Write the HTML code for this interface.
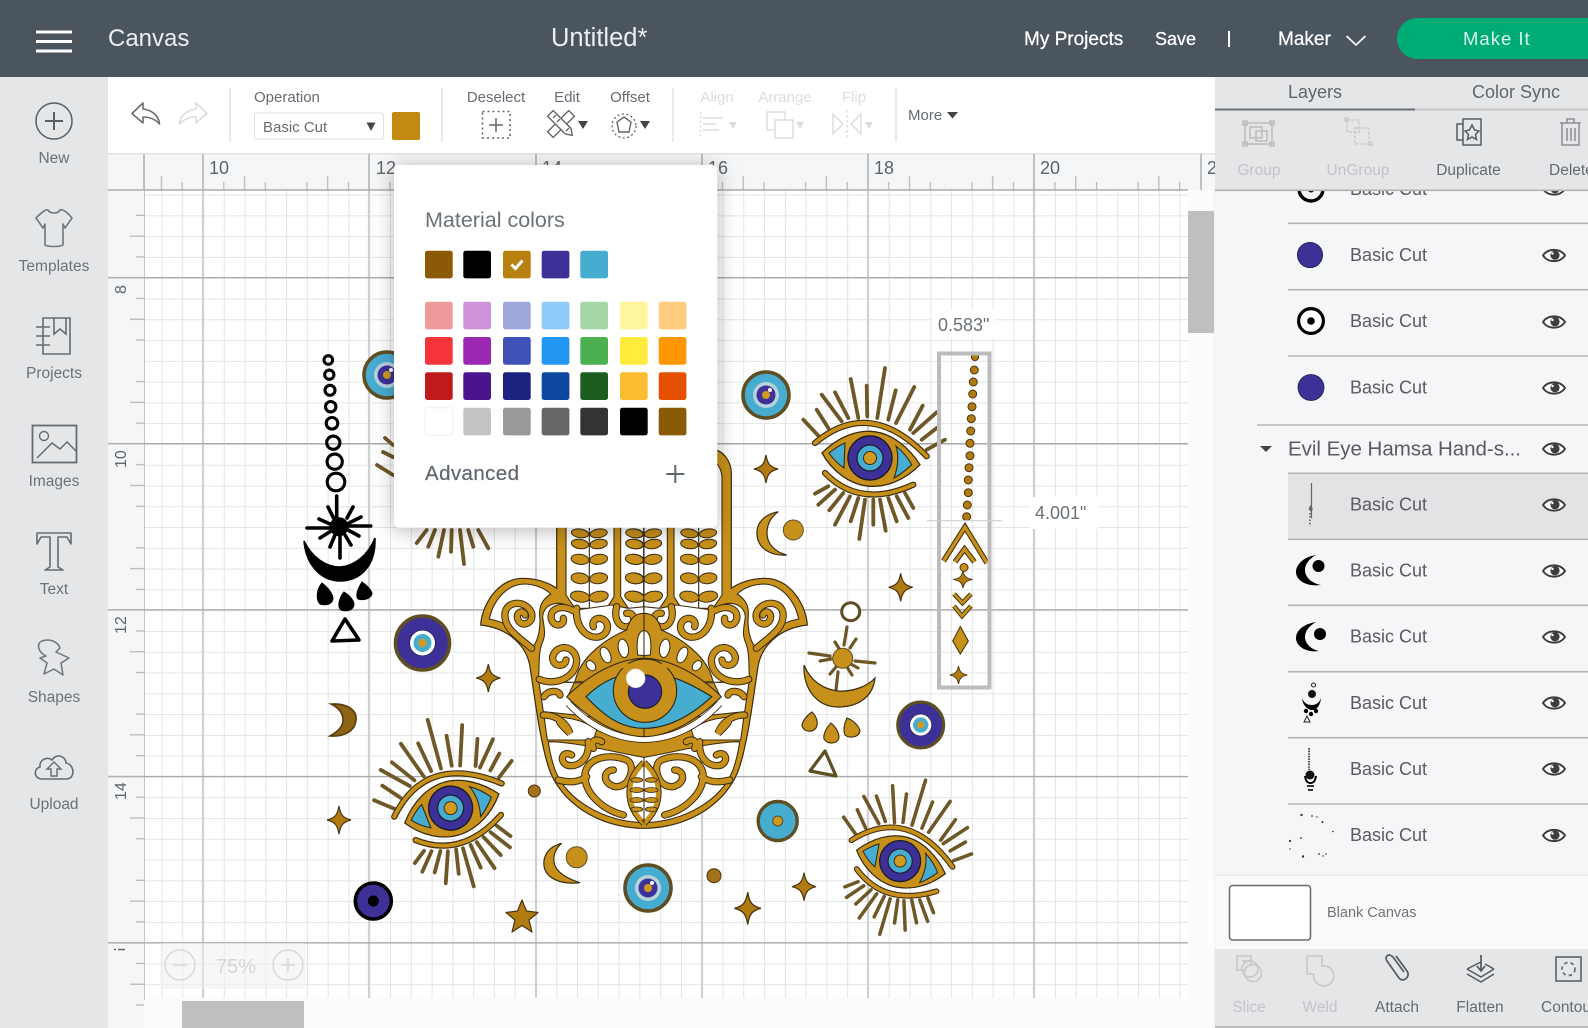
<!DOCTYPE html>
<html><head><meta charset="utf-8"><title>Canvas</title>
<style>
html,body{margin:0;padding:0;background:#fff;width:1588px;height:1028px;overflow:hidden}
svg{display:block;position:absolute;left:0;top:0;filter:blur(.35px)}
text{font-family:"Liberation Sans",sans-serif}
.hd{fill:#fff;font-size:19px;stroke:#fff;stroke-width:.25px}
.lb{fill:#6b7279;font-size:15.5px;text-anchor:middle}
.tb{fill:#666c72;font-size:15px;text-anchor:middle}
.dis{fill:#dcdde0;font-size:15px;text-anchor:middle}
.pa{fill:#666b71;font-size:15.5px;text-anchor:middle}
.pd{fill:#c2c4c7;font-size:15.5px;text-anchor:middle}
.rw{fill:#5b5a61;font-size:18px}
.ru{fill:#5f6469;font-size:18px}
</style></head><body>
<svg width="1588" height="1028" viewBox="0 0 1588 1028" xmlns="http://www.w3.org/2000/svg">
<defs>
<pattern id="gm" x="203" y="277.7" width="20.78" height="20.78" patternUnits="userSpaceOnUse">
<path d="M0,0V20.78M0,0H20.78" stroke="#e3e4e5" stroke-width="2" fill="none"/>
</pattern>
<pattern id="tt" x="203" y="154" width="83.12" height="36" patternUnits="userSpaceOnUse">
<path d="M20.78,28V36M41.56,22V36M62.34,28V36" stroke="#b5b7b9" stroke-width="1.2" fill="none"/>
</pattern>
<pattern id="tl" x="108" y="277.7" width="36" height="83.12" patternUnits="userSpaceOnUse">
<path d="M28,20.78H36M22,41.56H36M28,62.34H36" stroke="#b5b7b9" stroke-width="1.2" fill="none"/>
</pattern>

<g id="eyei"><path d="M-11,0C-6,-7.5 6,-7.5 11,0C6,7.5 -6,7.5 -11,0Z" fill="#fff" stroke="#3d3d40" stroke-width="1.9"/><circle cx="1" cy="-.3" r="4.6" fill="#3d3d40"/><circle cx="-1.5" cy="-2" r="1.2" fill="#fff"/></g>

<g id="lash">
<path d="M-51.7,-23.3L-66.7,-39.3M-41.7,-31L-53.3,-49.3M-28.3,-37.7L-48.3,-64.3M-21.7,-41L-35,-66.7M-11.7,-41L-19.3,-80M-2.7,-42.7L-3.3,-73.3M7.3,-41L15,-91M18.3,-39.3L25.7,-68.7M26,-36L44.3,-72M40,-29.3L52.7,-53.3M43.3,-26L66.7,-46.7M51.7,-19.3L66.7,-31M56.7,-9.3L75,-19.3M-41.7,27.3L-55,34.7M-35,30.7L-51.7,45.7M-26.7,34L-40.7,51.3M-20,37.3L-35,65.7M-11.7,39L-19.3,62.3M-5,40.7L-10.7,80M3.3,40.7L3.3,65.7M10,40.7L15.7,71.7M18.3,39L26.7,62.3M26.7,37.3L38.3,59M35,34L43.3,49" stroke="#6f5828" stroke-width="3.8" stroke-linecap="round" fill="none"/>
<path d="M-55,-16Q0,-62 56.7,-2.7" fill="none" stroke="#3f2f12" stroke-width="6.2" stroke-linecap="round"/>
<path d="M-55,-16Q0,-62 56.7,-2.7" fill="none" stroke="#c6901a" stroke-width="3.8" stroke-linecap="round"/>
<path d="M-45,14Q-10,50 43.3,25.7" fill="none" stroke="#3f2f12" stroke-width="6.2" stroke-linecap="round"/>
<path d="M-45,14Q-10,50 43.3,25.7" fill="none" stroke="#c6901a" stroke-width="3.8" stroke-linecap="round"/>
<path d="M-48,-6C-30,-24 -12,-28 0,-27.7C22,-27 40,-10 50,5.7C34,22 16,28 0,27.3C-20,26 -38,12 -48,-6Z" fill="#c6901a" stroke="#3a2c12" stroke-width="1.3"/>
<path d="M-41,-6C-36,-10 -30,-14 -25,-16L-26,9C-32,5 -37,0 -41,-6Z" fill="#46acd0" stroke="#2f2a16" stroke-width="1.1"/>
<path d="M26,-13C32,-8 38,-1 41.7,5.7C36,11 30,16 24,19C28,8 29,-3 26,-13Z" fill="#46acd0" stroke="#2f2a16" stroke-width="1.1"/>
<circle cx="0" cy="-1" r="22" fill="#3d3197" stroke="#1c1a2c" stroke-width="1.4"/>
<circle cx="0" cy="-1" r="13" fill="#46acd0" stroke="#1c1a2c" stroke-width="1.2"/>
<circle cx="0" cy="-1" r="6.5" fill="#d09a20" stroke="#3a2c12" stroke-width="1"/>
</g>

<path id="st4" d="M0,-14C1.5,-5 4,-2 12,0C4,2 1.5,5 0,14C-1.5,5 -4,2 -12,0C-4,-2 -1.5,-5 0,-14Z" fill="#b27b12" stroke="#4a3510" stroke-width="1.2"/>

<g id="eb">
<circle r="23" fill="#46acd0" stroke="#5e4e22" stroke-width="3.6"/>
<circle r="13" fill="#b7d2dd"/><circle r="9.5" fill="#3d3197"/>
<circle r="4" fill="#d09a20"/><circle cx="4" cy="-5" r="2" fill="#fff"/>
</g>
<g id="ep">
<circle r="27" fill="#3d3197" stroke="#5e4e22" stroke-width="3.6"/>
<circle r="13" fill="#fff" stroke="#2a2560" stroke-width="1"/><circle r="9" fill="#46acd0"/>
<circle r="4.2" fill="#d09a20"/>
</g>

<!-- hamsa parts -->
<g id="sprig" >
<path d="M0,-30V240" stroke="#3a2c12" stroke-width="3.4" fill="none"/>
<g fill="#c6901a" stroke="#3a2c12" stroke-width="3">
<ellipse cx="-28" cy="10" rx="26" ry="13" transform="rotate(8 -28 10)"/><ellipse cx="28" cy="10" rx="26" ry="13" transform="rotate(-8 28 10)"/>
<ellipse cx="-28" cy="42" rx="26" ry="14" transform="rotate(8 -28 42)"/><ellipse cx="28" cy="42" rx="26" ry="14" transform="rotate(-8 28 42)"/>
<ellipse cx="-28" cy="88" rx="27" ry="15" transform="rotate(8 -28 88)"/><ellipse cx="28" cy="88" rx="27" ry="15" transform="rotate(-8 28 88)"/>
<ellipse cx="-28" cy="145" rx="27" ry="16" transform="rotate(8 -28 145)"/><ellipse cx="28" cy="145" rx="27" ry="16" transform="rotate(-8 28 145)"/>
<ellipse cx="-28" cy="200" rx="29" ry="16" transform="rotate(10 -28 200)"/><ellipse cx="28" cy="200" rx="29" ry="16" transform="rotate(-10 28 200)"/>
</g>
</g>
<path id="scr" d="M215,625C175,590 130,565 135,520C140,480 200,480 215,520C222,555 175,565 172,530C172,515 190,510 195,525
M340,512C300,490 265,510 275,540C285,565 315,555 310,535
M238,718C290,740 350,710 350,660C345,615 290,610 278,650C275,680 315,685 318,660
M350,505C345,560 380,600 420,590C450,580 450,540 420,535C405,535 395,545 400,560
M470,500C460,540 480,565 505,560C530,550 525,515 500,520
M252,770C265,750 295,750 300,765
M385,905C390,960 350,985 320,975C295,960 310,930 335,945
M250,825C290,825 320,850 330,880C310,860 295,845 300,845
M490,1125C430,1110 370,1060 375,1000C385,950 450,940 500,960C530,975 510,1045 465,1040C425,1030 430,990 460,990
M295,1020C330,1030 360,1025 380,1010
M400,925C390,900 410,895 425,905" fill="none" stroke-linecap="round"/>

<g id="hh">
<path d="M552,1165C420,1165 300,1090 265,980C240,900 225,780 210,680C200,620 150,565 62,555C65,500 110,415 190,415C230,415 270,430 290,445L290,100C290,60 320,30 340,30L552,30V1165Z" fill="#c6901a"/>
<path d="M552,1165C420,1165 300,1090 265,980C240,900 225,780 210,680C200,620 150,565 62,555C65,500 110,415 190,415C230,415 270,430 290,445L290,100C290,60 320,30 340,30" fill="none" stroke="#3a2c12" stroke-width="3.6"/>
<path d="M318,115C318,85 335,65 350,60L462,60V470L440,505H345L318,465Z" fill="#fff" stroke="#3a2c12" stroke-width="3.2"/>
<path d="M482,60H552V505H505L482,470Z" fill="#fff" stroke="#3a2c12" stroke-width="3.2"/>
<use href="#sprig" x="388" y="270"/>
<use href="#sprig" x="553" y="270"/>
<path d="M88,537C100,480 140,435 190,432C225,432 255,445 272,462C245,480 235,500 240,540C240,580 230,610 215,625C190,585 140,545 88,537Z" fill="#fff" stroke="#3a2c12" stroke-width="3.2"/>
<path d="M248,530C250,495 290,478 330,500L350,510L455,495L505,505L552,500V730L340,728L235,716C240,680 232,640 250,600C258,580 250,550 248,530Z" fill="#fff" stroke="#3a2c12" stroke-width="3.2"/>
<path d="M237,727H343L322,772C345,795 370,815 395,830L250,815Z" fill="#fff" stroke="#3a2c12" stroke-width="3.2"/>
<path d="M252,828C320,832 365,835 410,870L400,900H262Z" fill="#fff" stroke="#3a2c12" stroke-width="3.2"/>
<path d="M265,905C350,905 450,935 552,952V1148C430,1145 320,1080 285,990C275,960 268,930 265,905Z" fill="#fff" stroke="#3a2c12" stroke-width="3.2"/>
<path d="M325,790C390,860 470,898 552,898" fill="none" stroke="#3a2c12" stroke-width="21"/>
<path d="M325,790C390,860 470,898 552,898" fill="none" stroke="#fff" stroke-width="16"/>
<use href="#scr" stroke="#3a2c12" stroke-width="22"/>
<use href="#scr" stroke="#c6901a" stroke-width="16"/>
<path d="M345,725C360,650 440,595 500,570C510,530 530,520 552,520V730Z" fill="#c6901a" stroke="#3a2c12" stroke-width="3.2"/>
<path d="M552,572C535,572 528,600 533,645L552,647Z" fill="#fff" stroke="#3a2c12" stroke-width="3"/>
<ellipse cx="490" cy="625" rx="15" ry="28" transform="rotate(-10 490 625)" fill="#fff" stroke="#3a2c12" stroke-width="3"/>
<ellipse cx="437" cy="645" rx="14" ry="25" transform="rotate(-25 437 645)" fill="#fff" stroke="#3a2c12" stroke-width="3"/>
<ellipse cx="393" cy="677" rx="12" ry="17" transform="rotate(-40 393 677)" fill="#fff" stroke="#3a2c12" stroke-width="3"/>
<path d="M320,770C390,700 480,655 552,655V890C480,890 390,840 320,770Z" fill="#c6901a" stroke="#3a2c12" stroke-width="3.2"/>
<path d="M552,968C500,1015 490,1090 552,1150" fill="#fff" stroke="#3a2c12" stroke-width="20"/>
<path d="M552,968C500,1015 490,1090 552,1150" fill="#fff" stroke="#c6901a" stroke-width="14"/>
</g>
</defs>

<!-- base -->
<rect width="1588" height="1028" fill="#fff"/>
<!-- canvas / grid -->
<rect x="108" y="154" width="1107" height="874" fill="#fbfbfb"/>
<rect x="144" y="190" width="1044" height="808" fill="#fff"/>
<rect x="144" y="190" width="1044" height="808" fill="url(#gm)"/>
<g stroke="#cfd0d1" stroke-width="2.2" fill="none">
<path d="M203,190V998M369,190V998M536,190V998M702,190V998M868,190V998M1034,190V998"/>
</g>
<g stroke="#a9abad" stroke-width="1.4" fill="none">
<path d="M108,277.7H1188M108,443.7H1188M108,609.8H1188M108,776.6H1188M108,942.8H1188"/>
<path d="M144,190V1028"/>
</g>
<!-- rulers -->
<rect x="108" y="154" width="1107" height="36" fill="#f5f6f7"/>
<rect x="108" y="190" width="36" height="838" fill="#f5f6f7"/>
<rect x="144" y="154" width="1071" height="36" fill="url(#tt)"/>
<rect x="108" y="190" width="36" height="838" fill="url(#tl)"/>
<path d="M108,153.5H1215" stroke="#e2e3e4" stroke-width="2"/>
<path d="M108,190H1188" stroke="#a9abad" stroke-width="1.4"/>
<g stroke="#b0b2b4" stroke-width="1.6"><path d="M144,154V190M203,154V190M369,154V190M536,154V190M702,154V190M868,154V190M1034,154V190M1201,154V190"/>
<path d="M108,277.7H144M108,443.7H144M108,609.8H144M108,776.6H144M108,942.8H144"/></g>
<g class="ru">
<text class="ru" x="209" y="174">10</text><text class="ru" x="376" y="174">12</text><text class="ru" x="542" y="174">14</text><text class="ru" x="708" y="174">16</text><text class="ru" x="874" y="174">18</text><text class="ru" x="1040" y="174">20</text><text class="ru" x="1207" y="174">2</text>
<text class="ru" transform="translate(126,294) rotate(-90)" style="font-size:16px">8</text>
<text class="ru" transform="translate(126,468) rotate(-90)" style="font-size:16px">10</text>
<text class="ru" transform="translate(126,634) rotate(-90)" style="font-size:16px">12</text>
<text class="ru" transform="translate(126,800) rotate(-90)" style="font-size:16px">14</text>
</g>
<path d="M114,949.5H125" stroke="#666" stroke-width="1.6" stroke-dasharray="2 2 7"/>

<!-- scrollbars -->
<rect x="1188" y="190" width="26" height="810" fill="#fcfcfc"/>
<rect x="1188" y="211" width="26" height="122" fill="#bfbfbf"/>
<rect x="144" y="1000" width="1071" height="28" fill="#fbfbfb"/>
<rect x="182" y="1001" width="122" height="27" fill="#bfbfbf"/>

<!-- zoom control faint -->
<rect x="160" y="943" width="146" height="46" rx="4" fill="#f0f0f0" opacity=".55"/>
<g fill="none" stroke="#d8d8d8" stroke-width="1.4"><circle cx="180" cy="965" r="15"/><circle cx="288" cy="965" r="15"/><path d="M173,965H187M281,965H295M288,958V972"/></g>
<text x="216" y="973" style="font-size:20px" fill="#d6d6d6">75%</text>

<!-- black necklace -->
<g fill="none" stroke="#000" stroke-width="3.1">
<circle cx="328.3" cy="360" r="4.3"/><circle cx="329.3" cy="374.7" r="4.6"/><circle cx="330" cy="390.3" r="5"/><circle cx="330.7" cy="406.7" r="5.2"/>
<circle cx="332" cy="423.3" r="5.8"/><circle cx="333.3" cy="442.7" r="6.6"/><circle cx="334.7" cy="461.7" r="7.6"/><circle cx="336" cy="482" r="8.8"/>
</g>
<circle cx="339" cy="526.7" r="9.5" fill="#000"/>
<g stroke="#000" stroke-width="3.6" stroke-linecap="round">
<path d="M336.7,496V518M340,535V558M307,528H330M348,526H370.7M328,507L334,519M353,507L347,518M319,519L330,524M361,517L349,523M320,538L331,531M359,536L348,530M330,547L335,535M351,545L345,535"/>
</g>
<path d="M304,541C306,566 322,581 340,581C360,581 376,566 375,538C368,555 355,566 340,567C325,567 312,557 304,541Z" fill="#000" stroke="#000" stroke-width="1.5"/>
<path d="M322,583C316,590 316,600 320,604C326,606 333,604 333,598C332,592 327,587 322,583Z M344,592C339,598 337,607 341,610C347,612 354,610 354,604C353,599 349,595 344,592Z M362,582C358,588 355,596 358,599C364,601 372,598 372,593C370,588 366,585 362,582Z" fill="#000" stroke="#000"/>
<path d="M345,619L332,641L359,640Z" fill="none" stroke="#000" stroke-width="3.6" stroke-linejoin="round"/>

<!-- circular eyes -->
<use href="#eb" x="387" y="375"/>
<use href="#eb" x="766" y="395"/>
<use href="#eb" x="648" y="888"/>
<use href="#ep" x="422.5" y="643"/>
<use href="#ep" transform="translate(920.7,725) scale(.85)"/>
<circle cx="777.7" cy="821" r="19.5" fill="#46acd0" stroke="#5e4e22" stroke-width="3.4"/>
<circle cx="777.7" cy="821" r="5" fill="#d09a20" stroke="#5e4e22" stroke-width="1"/>
<circle cx="373.3" cy="901" r="18" fill="#3d3197" stroke="#000" stroke-width="3.6"/>
<circle cx="373.3" cy="901" r="5.5" fill="#000"/>

<!-- lashes eyes -->
<use href="#lash" x="870" y="459"/>
<use href="#lash" transform="translate(451,809) rotate(-24)"/>
<use href="#lash" transform="translate(900,862) rotate(8) scale(.93)"/>
<path d="M426.7,530L416.7,543M435,530L428.3,546.7M444,530L438.3,556.7M451.7,530L451,551.7M460,530L464,564M468.3,530L473.3,546.7M478.3,530L488.3,548.3M385,438L393,445M383,452L393,457M377,465L393,475" stroke="#6f5828" stroke-width="3.8" stroke-linecap="round"/>

<!-- hamsa -->
<g transform="translate(460,440) scale(.33333)">
<use href="#hh"/>
<use href="#hh" transform="translate(1104,0) scale(-1,1)"/>
<path d="M552,960V1150" stroke="#3a2c12" stroke-width="3"/>
<g fill="#c6901a" stroke="#3a2c12" stroke-width="2.6">
<ellipse cx="530" cy="1020" rx="18" ry="7"/><ellipse cx="574" cy="1020" rx="18" ry="7"/>
<ellipse cx="530" cy="1050" rx="20" ry="7.5"/><ellipse cx="574" cy="1050" rx="20" ry="7.5"/>
<ellipse cx="530" cy="1080" rx="20" ry="7.5"/><ellipse cx="574" cy="1080" rx="20" ry="7.5"/>
<ellipse cx="530" cy="1108" rx="18" ry="7"/><ellipse cx="574" cy="1108" rx="18" ry="7"/>
</g>
<path d="M378,770C430,720 480,700 552,695C630,700 690,730 755,770C690,830 620,865 552,865C480,865 430,825 378,770Z" fill="#46acd0" stroke="#1f2a22" stroke-width="3.4"/>
<circle cx="555" cy="752" r="95" fill="#c6901a" stroke="#2f2a16" stroke-width="3.4"/>
<path d="M420,715C470,665 640,665 690,715L660,690C620,660 490,660 450,690Z" fill="#c6901a"/>
<circle cx="555" cy="755" r="50" fill="#3d3197" stroke="#1c1a2c" stroke-width="3.4"/>
<circle cx="527" cy="715" r="28" fill="#fff" stroke="#e6e6ea" stroke-width="2"/>
</g>

<!-- stars & small -->
<use href="#st4" x="766" y="469"/>
<use href="#st4" x="488.3" y="678"/>
<use href="#st4" x="900.7" y="587.3"/>
<use href="#st4" x="339" y="820"/>
<use href="#st4" transform="translate(747.7,908.3) scale(1.1,1.15)"/>
<use href="#st4" x="804" y="886.7"/>
<path d="M522,900L526.5,911L538,912.5L529,920L532,932L522,925.5L512,932L515,920L506,912.5L517.5,911Z" fill="#b27b12" stroke="#4a3510" stroke-width="1.2" stroke-linejoin="round"/>
<!-- crescents -->
<path d="M778.3,511.7C762,515 756,525 757,535C758,548 770,556 786.7,555C775,552 767,544 767,533C767,524 771,517 778.3,511.7Z" fill="#c6901a" stroke="#3a2c12" stroke-width="1.2"/>
<circle cx="793.3" cy="530" r="10" fill="#c6901a" stroke="#5e4e22" stroke-width="1"/>
<path d="M561.7,843.3C547,847 543,857 544,866C546,878 560,885 580,882.7C568,879 555,872 554,862C553,855 556,848 561.7,843.3Z" fill="#c6901a" stroke="#3a2c12" stroke-width="1.2"/>
<circle cx="576.7" cy="857.3" r="10.5" fill="#c6901a" stroke="#5e4e22" stroke-width="1"/>
<path d="M331,704C350,703 357,712 356,720C355,730 346,737 330,736C339,731 343,726 343,720C343,713 339,708 331,704Z" fill="#8d6414" stroke="#5a3d10" stroke-width="1.6"/>
<circle cx="534.3" cy="791" r="6" fill="#a4701a" stroke="#4a3510" stroke-width="1"/>
<circle cx="714" cy="875.7" r="7" fill="#a4701a" stroke="#4a3510" stroke-width="1"/>
<!-- gold sun group -->
<circle cx="850.7" cy="611.7" r="9" fill="#fff" stroke="#5e4e22" stroke-width="3"/>
<g stroke="#6e5726" stroke-width="3.2" stroke-linecap="round"><path d="M847,627L844,645M838,672L836,690M809,653L830,656M855,661L875,663M835,642L840,650M856,639L850,648M820,661L831,659M858,668L849,663M830,674L836,667M852,675L847,667"/></g>
<circle cx="842.7" cy="658.3" r="10" fill="#c6901a" stroke="#5e4e22" stroke-width="1"/>
<path d="M804,665C803,690 818,707 838,707C858,707 873,697 875,678C868,686 853,692 838,691C822,689 810,680 804,665Z" fill="#c6901a" stroke="#3a2c12" stroke-width="1.2"/>
<path d="M812,712C806,716 802,722 802,726C804,732 812,733 816,728C819,722 816,716 812,712Z M831,723C826,728 823,735 824,739C828,745 837,744 839,738C839,733 836,727 831,723Z M847,718C844,724 843,731 845,735C850,739 859,737 860,731C859,726 853,720 847,718Z" fill="#c6901a" stroke="#3a2c12" stroke-width="1.1"/>
<path d="M825,751L810,771L836,776Z" fill="none" stroke="#5e4e22" stroke-width="3.2" stroke-linejoin="round"/>

<!-- selected element -->
<g fill="#b27b12" stroke="#4a3510" stroke-width="1">
<circle cx="975" cy="357" r="3.6"/><circle cx="974.3" cy="370" r="4"/><circle cx="973.3" cy="382" r="4"/><circle cx="972.7" cy="394" r="4"/><circle cx="972" cy="406.7" r="4"/><circle cx="971.3" cy="418.7" r="4"/><circle cx="970.7" cy="431" r="4"/><circle cx="970" cy="443.3" r="4"/><circle cx="970" cy="455.7" r="4"/><circle cx="969" cy="467.7" r="4"/><circle cx="968.3" cy="480" r="4"/><circle cx="968.3" cy="492.7" r="4"/><circle cx="967.3" cy="505" r="4"/><circle cx="966.7" cy="516.7" r="4"/>
</g>
<g fill="none" stroke-linejoin="miter">
<path d="M943.5,561L965,527L987,563M955,562L964.5,549L974.5,562" stroke="#4a3510" stroke-width="5.4"/>
<path d="M943.5,561L965,527L987,563M955,562L964.5,549L974.5,562" stroke="#c6901a" stroke-width="3.2"/>
<path d="M954,594L962.5,603L971,594M954,606L962,616L971,606" stroke="#4a3510" stroke-width="4.6"/>
<path d="M954,594L962.5,603L971,594M954,606L962,616L971,606" stroke="#c6901a" stroke-width="2.6"/>
</g>
<circle cx="964" cy="567.5" r="4" fill="#c6901a" stroke="#4a3510"/>
<use href="#st4" transform="translate(963,579.5) scale(.8,.6)"/>
<path d="M960.3,626.5L968.3,641L960.3,654L952.7,641Z" fill="#c6901a" stroke="#4a3510" stroke-width="1.1"/>
<use href="#st4" transform="translate(958.5,675) scale(.75,.65)"/>
<rect x="939" y="353.5" width="50.5" height="334" fill="none" stroke="#bcbcbc" stroke-width="4"/>
<path d="M927,520.7H1002" stroke="#cfcfcf" stroke-width="1.2"/>
<rect x="1030" y="497" width="68" height="32" fill="#fff"/>
<text x="1035" y="519" style="font-size:18px" fill="#6b7278">4.001"</text>
<rect x="932" y="310" width="62" height="28" fill="#fff"/>
<text x="938" y="331" style="font-size:18px" fill="#6b7278">0.583"</text>

<!-- popover -->
<rect x="394" y="165" width="323.3" height="362.7" rx="5" fill="#fff" style="filter:drop-shadow(0 3px 10px rgba(0,0,0,.28))"/>
<text x="425" y="227" style="font-size:21.5px" fill="#6b7278">Material colors</text>
<g id="sw">
<rect x="425" y="250.7" width="27.7" height="27.7" rx="2.5" fill="#8b5a07"/>
<rect x="463.3" y="250.7" width="27.7" height="27.7" rx="2.5" fill="#000"/>
<rect x="503" y="250.7" width="27.7" height="27.7" rx="2.5" fill="#b8810f"/>
<rect x="541.7" y="250.7" width="27.7" height="27.7" rx="2.5" fill="#3d3197"/>
<rect x="580.3" y="250.7" width="27.7" height="27.7" rx="2.5" fill="#46acd0"/>
<path d="M511.5,264.5L515.5,268.5L522.5,260.5" fill="none" stroke="#fff" stroke-width="3"/>

<rect x="425" y="301.7" width="27.7" height="27.7" rx="2.5" fill="#ef9a9a"/><rect x="463.3" y="301.7" width="27.7" height="27.7" rx="2.5" fill="#ce93d8"/><rect x="503" y="301.7" width="27.7" height="27.7" rx="2.5" fill="#9fa8da"/><rect x="541.7" y="301.7" width="27.7" height="27.7" rx="2.5" fill="#90caf9"/><rect x="580.3" y="301.7" width="27.7" height="27.7" rx="2.5" fill="#a5d6a7"/><rect x="620" y="301.7" width="27.7" height="27.7" rx="2.5" fill="#fff59d"/><rect x="658.7" y="301.7" width="27.7" height="27.7" rx="2.5" fill="#ffcc80"/>

<rect x="425" y="337" width="27.7" height="27.7" rx="2.5" fill="#f5333a"/><rect x="463.3" y="337" width="27.7" height="27.7" rx="2.5" fill="#9c27b0"/><rect x="503" y="337" width="27.7" height="27.7" rx="2.5" fill="#3f51b5"/><rect x="541.7" y="337" width="27.7" height="27.7" rx="2.5" fill="#2196f3"/><rect x="580.3" y="337" width="27.7" height="27.7" rx="2.5" fill="#4caf50"/><rect x="620" y="337" width="27.7" height="27.7" rx="2.5" fill="#ffeb3b"/><rect x="658.7" y="337" width="27.7" height="27.7" rx="2.5" fill="#ff9800"/>

<rect x="425" y="372.3" width="27.7" height="27.7" rx="2.5" fill="#c01b1b"/><rect x="463.3" y="372.3" width="27.7" height="27.7" rx="2.5" fill="#4a148c"/><rect x="503" y="372.3" width="27.7" height="27.7" rx="2.5" fill="#1a237e"/><rect x="541.7" y="372.3" width="27.7" height="27.7" rx="2.5" fill="#0d47a1"/><rect x="580.3" y="372.3" width="27.7" height="27.7" rx="2.5" fill="#1b5e20"/><rect x="620" y="372.3" width="27.7" height="27.7" rx="2.5" fill="#fbbd30"/><rect x="658.7" y="372.3" width="27.7" height="27.7" rx="2.5" fill="#e65100"/>

<rect x="425" y="407.7" width="27.7" height="27.7" rx="3" fill="#fff" stroke="#eeeeee" stroke-width="1"/><rect x="463.3" y="407.7" width="27.7" height="27.7" rx="2.5" fill="#c4c4c4"/><rect x="503" y="407.7" width="27.7" height="27.7" rx="2.5" fill="#999"/><rect x="541.7" y="407.7" width="27.7" height="27.7" rx="2.5" fill="#666"/><rect x="580.3" y="407.7" width="27.7" height="27.7" rx="2.5" fill="#333"/><rect x="620" y="407.7" width="27.7" height="27.7" rx="2.5" fill="#000"/><rect x="658.7" y="407.7" width="27.7" height="27.7" rx="2.5" fill="#8b5a07"/>
</g>
<text x="425" y="480" style="font-size:20.5px" fill="#5f6870" stroke="#5f6870" stroke-width=".2" textLength="94">Advanced</text>
<path d="M675.3,465V483M666.3,474H684.3" stroke="#5f6870" stroke-width="2"/>

<!-- toolbar -->
<rect x="108" y="77" width="1107" height="76" fill="#fff"/>
<g stroke="#e4e5e6" stroke-width="1.5"><path d="M230,88V142M442,88V142M673,88V142M896,88V142"/></g>
<path d="M132,113.5L143,103V109C152,110 159,116 159.5,124C155,119 150,117 143,117V123Z" fill="none" stroke="#6a6d70" stroke-width="1.6" stroke-linejoin="round"/>
<path d="M207,113.5L196,103V109C187,110 180,116 179.5,124C184,119 189,117 196,117V123Z" fill="none" stroke="#dcdcdc" stroke-width="1.6" stroke-linejoin="round"/>
<text x="254" y="102" class="tb" style="text-anchor:start">Operation</text>
<rect x="254.5" y="113" width="129" height="26" rx="2" fill="#fff" stroke="#dfe0e1"/>
<text x="263" y="132" class="tb" style="text-anchor:start">Basic Cut</text>
<path d="M366.5,122.5H375.5L371,131Z" fill="#444"/>
<rect x="392" y="112" width="28" height="28" rx="2" fill="#c2880f"/>
<text x="496" y="102" class="tb">Deselect</text><text x="567" y="102" class="tb">Edit</text><text x="630" y="102" class="tb">Offset</text>
<rect x="482.5" y="111.5" width="27.5" height="26.5" fill="none" stroke="#666" stroke-width="1.6" stroke-dasharray="2 3"/>
<path d="M496,118V132M489,125H503" stroke="#666" stroke-width="1.5"/>
<!-- edit icon -->
<g fill="none" stroke="#666" stroke-width="1.4">
<rect x="-4" y="-15" width="8" height="30" transform="translate(561,124) rotate(45)"/>
<path d="M-4,-15L-4,10L0,16L4,10L4,-15Z" transform="translate(561,124) rotate(-45)" fill="#fff"/>
<path d="M553,118L556,115M557,122L560,119M566,131L569,128" />
</g>
<path d="M578,121H588L583,129Z" fill="#444"/>
<!-- offset -->
<circle cx="624" cy="126" r="12" fill="none" stroke="#666" stroke-width="1.3" stroke-dasharray="2 2.5"/>
<path d="M624,117L631,122L629,132H619L617,122Z" fill="none" stroke="#666" stroke-width="1.4"/>
<path d="M640,121H650L645,129Z" fill="#444"/>
<!-- disabled -->
<text x="717" y="102" class="dis">Align</text><text x="785" y="102" class="dis">Arrange</text><text x="854" y="102" class="dis">Flip</text>
<g fill="none" stroke="#dcdddf" stroke-width="1.5">
<path d="M700.5,112V137" stroke-dasharray="2 2.5"/><path d="M703,118H723M703,124H716M703,130H719"/>
<rect x="767" y="112" width="18" height="18"/><rect x="775" y="120" width="18" height="18" fill="#fff"/>
<path d="M847,110V138" stroke-dasharray="2.5 2.5"/><path d="M843,124L833,114V134ZM851,124L861,114V134Z"/>
</g>
<path d="M729,122H737L733,129ZM796,122H804L800,129ZM865,122H873L869,129Z" fill="#dcdddf"/>
<text x="908" y="120" class="tb" style="text-anchor:start">More</text>
<path d="M947,112H958L952.5,118.5Z" fill="#444"/>

<!-- sidebar -->
<rect x="0" y="77" width="108" height="951" fill="#e5e6e8"/>
<circle cx="54" cy="121" r="18" fill="none" stroke="#585e64" stroke-width="1.5"/>
<path d="M54,112V130M45,121H63" stroke="#585e64" stroke-width="2"/>
<text x="54" y="163" class="lb">New</text>
<path d="M36,218C42,212 46,209 48,210C50,214 58,214 60,210C63,209 67,212 72,218L65,228L63,224V245C60,247 48,247 45,245V224L43,228Z" fill="none" stroke="#70767c" stroke-width="1.6" stroke-linejoin="round"/>
<text x="54" y="271" class="lb">Templates</text>
<path d="M43,318H70V354H43ZM36,327H50M36,336H50M36,345H50M54,318V334L60,329L66,334V318" fill="none" stroke="#666c72" stroke-width="1.6"/>
<text x="54" y="378" class="lb">Projects</text>
<rect x="32.5" y="425.5" width="44" height="37" fill="none" stroke="#666c72" stroke-width="1.8"/>
<circle cx="44" cy="436" r="4.5" fill="none" stroke="#666c72" stroke-width="1.4"/>
<path d="M37,458L52,443L60,449L67,442L77,452" fill="none" stroke="#666c72" stroke-width="1.5"/>
<text x="54" y="486" class="lb">Images</text>
<path d="M37,533H71V544L67,537H58V567L63,570H45L50,567V537H41L37,544Z" fill="none" stroke="#666c72" stroke-width="1.6" stroke-linejoin="round"/>
<text x="54" y="594" class="lb">Text</text>
<path d="M46,656C38,652 36,644 42,641C50,638 58,642 60,648L56,652L69,658L61,663L63,675L54,669L44,674L47,663L40,658Z" fill="none" stroke="#70767c" stroke-width="1.5" stroke-linejoin="round"/>
<text x="54" y="702" class="lb">Shapes</text>
<path d="M42,779C34,779 33,769 40,767C39,760 47,756 52,760C56,753 66,756 66,763C74,764 76,778 67,779Z" fill="none" stroke="#666c72" stroke-width="1.6"/>
<path d="M54,762L47,769H51V776H57V769H61Z" fill="none" stroke="#666c72" stroke-width="1.4"/>
<text x="54" y="809" class="lb">Upload</text>

<!-- right panel list -->
<rect x="1215" y="190" width="373" height="685" fill="#f5f6f8"/>
<path d="M1214.5,190V1028" stroke="#f1f1f2" stroke-width="1"/>
<rect x="1288" y="473" width="300" height="66" fill="#e3e3e5"/>
<g stroke="#b4b5b7" stroke-width="1.6">
<path d="M1288,223.3H1588M1288,289.7H1588M1288,356H1588M1257,425H1588M1288,473.3H1588M1288,539.3H1588M1288,605.3H1588M1288,671.7H1588M1288,737.7H1588M1288,804H1588"/>
</g>
<circle cx="1311" cy="189" r="12" fill="none" stroke="#000" stroke-width="3.4"/><circle cx="1311" cy="189" r="3.5" fill="#000"/>
<circle cx="1310" cy="255" r="12.6" fill="#3d3197" stroke="#1d1a50" stroke-width=".8"/>
<circle cx="1311" cy="321" r="12.4" fill="#fff" stroke="#000" stroke-width="3.2"/><circle cx="1311" cy="321" r="3.8" fill="#000"/>
<circle cx="1311" cy="387.5" r="13" fill="#3d3197" stroke="#1d1a50" stroke-width=".8"/>
<path d="M1260,446H1272L1266,452Z" fill="#444"/>
<path d="M1311.5,483V518" stroke="#666" stroke-width="1.2"/><path d="M1310.5,505L1313,509L1311,512L1308.5,509Z" fill="#666"/><path d="M1310,513V526" stroke="#555" stroke-width="1.4" stroke-dasharray="1.6 1.6"/>
<path d="M1316,555C1303,557 1296,565 1296,572C1296,580 1306,587 1321,585C1311,583 1305,577 1305,570C1305,564 1309,559 1316,555Z" fill="#000"/><circle cx="1318.5" cy="566" r="6" fill="#000"/>
<path d="M1316,622C1303,624 1296,631 1296,638C1296,646 1306,653 1319,651C1310,649 1305,643 1305,637C1305,631 1309,626 1316,622Z" fill="#000"/><circle cx="1320" cy="634" r="6" fill="#000"/>
<!-- necklace thumb -->
<circle cx="1313.5" cy="685" r="2" fill="none" stroke="#222"/><circle cx="1312" cy="694" r="4" fill="#111"/>
<path d="M1302,698C1303,707 1309,710 1312,710C1316,710 1320,707 1321,698C1319,703 1316,705 1312,705C1307,705 1304,703 1302,698Z" fill="#000"/>
<circle cx="1306" cy="711" r="2.2" fill="#000"/><circle cx="1311" cy="714" r="2.2" fill="#000"/><circle cx="1316" cy="711" r="2.2" fill="#000"/>
<path d="M1304,722H1310L1307,716Z" fill="none" stroke="#222"/>
<!-- long thumb -->
<path d="M1309,748V770" stroke="#555" stroke-width="2" stroke-dasharray="1.6 1"/><circle cx="1310" cy="775" r="4.5" fill="#111"/>
<path d="M1305,776C1306,782 1308,783 1310.5,783C1313,783 1315,782 1316,776" fill="none" stroke="#000" stroke-width="2"/><path d="M1307,786H1314M1308,790H1313" stroke="#333" stroke-width="2"/>
<!-- dots thumb -->
<g fill="#333"><circle cx="1301.5" cy="815" r="1.2"/><circle cx="1312" cy="816" r=".9"/><circle cx="1317" cy="817" r=".7"/><circle cx="1322.5" cy="822" r="1"/><circle cx="1333" cy="831.5" r=".8"/><circle cx="1290" cy="841" r="1.1"/><circle cx="1301" cy="838" r=".9"/><circle cx="1290" cy="849" r=".7"/><circle cx="1303" cy="856.5" r="1.2"/><circle cx="1319" cy="854" r=".9"/><circle cx="1323" cy="856" r=".7"/><circle cx="1326" cy="854" r=".7"/></g>
<g>
<text class="rw" x="1350" y="195">Basic Cut</text><text class="rw" x="1350" y="261">Basic Cut</text><text class="rw" x="1350" y="327">Basic Cut</text><text class="rw" x="1350" y="393.5">Basic Cut</text>
<text class="rw" x="1350" y="510.5">Basic Cut</text><text class="rw" x="1350" y="576.5">Basic Cut</text><text class="rw" x="1350" y="642.5">Basic Cut</text><text class="rw" x="1350" y="709">Basic Cut</text><text class="rw" x="1350" y="775">Basic Cut</text><text class="rw" x="1350" y="841">Basic Cut</text>
</g>
<text x="1288" y="455.5" style="font-size:20.5px" fill="#5b5a61" textLength="233">Evil Eye Hamsa Hand-s...</text>
<use href="#eyei" x="1554" y="189"/><use href="#eyei" x="1554" y="255.5"/><use href="#eyei" x="1554" y="322"/><use href="#eyei" x="1554" y="388"/><use href="#eyei" x="1554" y="449"/><use href="#eyei" x="1554" y="505"/><use href="#eyei" x="1554" y="571"/><use href="#eyei" x="1554" y="637"/><use href="#eyei" x="1554" y="703"/><use href="#eyei" x="1554" y="769"/><use href="#eyei" x="1554" y="835.5"/>

<!-- panel top -->
<rect x="1215" y="77" width="373" height="113" fill="#e5e6e8"/>
<path d="M1215,190.3H1588" stroke="#b2b3b5" stroke-width="1.6"/>
<path d="M1415,109.5H1588" stroke="#c6c7c9" stroke-width="2"/>
<path d="M1215,109.5H1415" stroke="#6a6f75" stroke-width="2"/>
<text x="1315" y="98" style="font-size:18px;text-anchor:middle" fill="#60666c">Layers</text>
<text x="1516" y="98" style="font-size:18px;text-anchor:middle" fill="#60666c">Color Sync</text>
<g fill="none" stroke="#bcbec0" stroke-width="1.6">
<rect x="1245" y="123" width="27" height="21"/><rect x="1250" y="127" width="12" height="11"/><rect x="1256" y="131" width="11" height="10"/>
<path d="M1243,121h4v4h-4zM1270,121h4v4h-4zM1243,142h4v4h-4zM1270,142h4v4h-4z"/>
</g>
<g fill="none" stroke="#c8cacc" stroke-width="1.5">
<rect x="1347" y="120" width="12" height="12" stroke-dasharray="3 1.5"/><rect x="1355" y="128" width="14" height="16" stroke-dasharray="3 1.5"/><path d="M1345,118h3v3h-3zM1369,142h3v3h-3z"/>
</g>
<g fill="none" stroke="#565b60" stroke-width="1.5">
<path d="M1463,119H1481V145H1463Z"/><path d="M1463,124H1457V140H1463"/>
<path d="M1472,125L1474.5,130L1479,131L1475.5,134.5L1476.5,139.5L1472,137L1467.5,139.5L1468.5,134.5L1465,131L1469.5,130Z"/>
</g>
<g fill="none" stroke="#8b8e91" stroke-width="1.5">
<path d="M1560,123H1581M1567,123V119H1574V123M1562,123V145H1579V123M1567,128V141M1571,128V141M1575,128V141"/>
</g>
<text x="1259" y="175" class="pd">Group</text><text x="1358" y="175" class="pd">UnGroup</text><text x="1468.5" y="175" class="pa">Duplicate</text><text x="1549" y="175" class="pa" style="text-anchor:start">Delete</text>

<!-- blank canvas -->
<rect x="1215" y="875" width="373" height="75" fill="#f9f9fa"/>
<path d="M1215,875H1588" stroke="#eeeff0" stroke-width="2"/>
<rect x="1229.5" y="885.5" width="81" height="54.5" rx="3" fill="#fff" stroke="#6a6a6a" stroke-width="1.5"/>
<text x="1327" y="917" style="font-size:14.5px" fill="#6e747a">Blank Canvas</text>

<!-- bottom actions -->
<rect x="1215" y="949" width="373" height="78" fill="#e5e6e8"/>
<path d="M1215,1027H1588" stroke="#a9aaac" stroke-width="1.6"/>
<g fill="none" stroke="#c6c8ca" stroke-width="1.6">
<path d="M1246,970H1237V956H1251V964"/><path d="M1242,961H1252" /><circle cx="1253" cy="973" r="8.5"/><circle cx="1250" cy="969" r="8"/>
<path d="M1307,956H1322V966A10,10 0 1 1 1314,974H1307Z"/>
</g>
<g fill="none" stroke="#55595d" stroke-width="1.7">
<path d="M1396,955L1407,970C1411,976 1403,982 1399,977L1387,960C1384,955 1389,952 1393,956L1404,971" transform="translate(0,1)"/>
<path d="M1481,955V970M1477,966L1481,971L1485,966"/>
<path d="M1467,969L1481,962M1494,969L1481,977L1467,969M1467,974L1481,982L1494,974M1485,964L1494,969" stroke-width="1.4"/>
<rect x="1556" y="957" width="25" height="24" stroke="#666a6e"/>
<circle cx="1568.5" cy="969" r="6.5" stroke="#666a6e" stroke-dasharray="3.5 3"/>
</g>
<text x="1249" y="1012" class="pd">Slice</text><text x="1320" y="1012" class="pd">Weld</text><text x="1397" y="1012" class="pa">Attach</text><text x="1480" y="1012" class="pa">Flatten</text><text x="1541" y="1012" class="pa" style="text-anchor:start">Contour</text>

<!-- header -->
<rect width="1588" height="77" fill="#4b555e"/>
<path d="M36,32H72M36,41.5H72M36,51H72" stroke="#fff" stroke-width="3"/>
<text x="108" y="46" style="font-size:24px" fill="#eceef0">Canvas</text>
<text x="551" y="46" style="font-size:25.5px" fill="#eceef0">Untitled*</text>
<text class="hd" x="1024" y="45">My Projects</text>
<text class="hd" x="1155" y="45" style="font-size:18px">Save</text>
<path d="M1229,31V47" stroke="#fff" stroke-width="2"/>
<text class="hd" x="1278" y="45">Maker</text>
<path d="M1346.5,36L1356,45L1365.5,36" fill="none" stroke="#fff" stroke-width="1.7"/>
<rect x="1397" y="18" width="230" height="41" rx="20.5" fill="#00ac75"/>
<text x="1463" y="45" style="font-size:18.5px;letter-spacing:1px" fill="#d8f6ea">Make It</text>
</svg>
</body></html>
